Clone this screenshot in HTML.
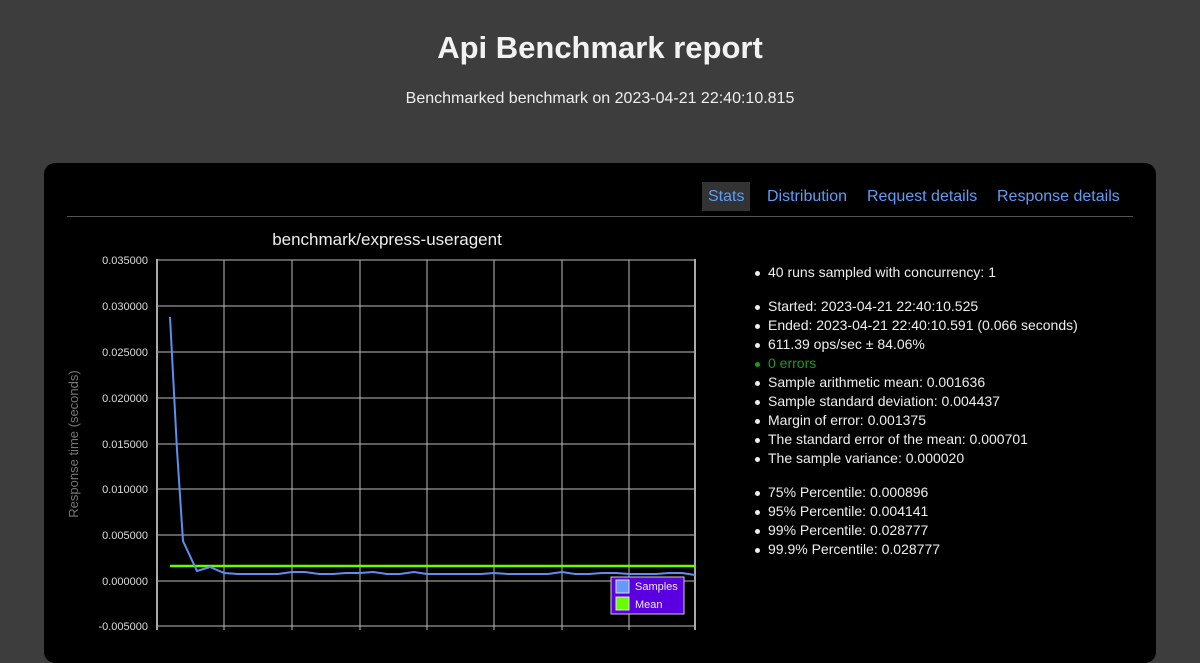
<!DOCTYPE html>
<html><head><meta charset="utf-8"><style>
*{margin:0;padding:0;box-sizing:border-box}
body{width:1200px;height:630px;overflow:hidden;background:#3d3d3d;font-family:"Liberation Sans",sans-serif;color:#eee;position:relative}
h1{position:absolute;top:30px;width:100%;text-align:center;font-size:31px;font-weight:bold;color:#f2f2f2}
.sub{position:absolute;top:90px;width:100%;text-align:center;font-size:16px;color:#eee}
.card{position:absolute;left:44px;top:163px;width:1112px;height:500px;background:#000;border-radius:11px}
.tabs{position:absolute;top:182px;left:0;width:1200px;height:30px}
.tab{position:absolute;top:0;height:29px;line-height:29px;font-size:16px;color:#5c9df5;padding:0 6px}
.hr{position:absolute;left:67px;top:216px;width:1066px;height:1px;background:#555}
ul{position:absolute;left:768px;list-style:none;font-size:14px;line-height:19px;color:#eee}
li{position:relative}
li:before{content:"";position:absolute;left:-13px;top:8px;width:5px;height:5px;border-radius:50%;background:#eee}
li.g{color:#1c9a1c}li.g:before{background:#1c9a1c}
</style></head><body>
<h1>Api Benchmark report</h1>
<div class="sub">Benchmarked benchmark on 2023-04-21 22:40:10.815</div>
<div class="card"></div>
<div class="tabs">
<div class="tab" style="left:702px;background:#333">Stats</div>
<div class="tab" style="left:761px">Distribution</div>
<div class="tab" style="left:861px">Request details</div>
<div class="tab" style="left:991px">Response details</div>
</div>
<div class="hr"></div>
<svg style="position:absolute;left:0;top:0" width="1200" height="630" font-family="Liberation Sans, sans-serif">
<text x="387" y="245" fill="#eee" font-size="17" text-anchor="middle">benchmark/express-useragent</text>
<g stroke="#bbb" stroke-width="1">
<line x1="157" y1="260" x2="694" y2="260"/><line x1="157" y1="306" x2="694" y2="306"/><line x1="157" y1="352" x2="694" y2="352"/><line x1="157" y1="398" x2="694" y2="398"/><line x1="157" y1="444" x2="694" y2="444"/><line x1="157" y1="489" x2="694" y2="489"/><line x1="157" y1="535" x2="694" y2="535"/><line x1="157" y1="581" x2="694" y2="581"/><line x1="157" y1="626" x2="694" y2="626"/>
<line x1="224" y1="260" x2="224" y2="630"/><line x1="292" y1="260" x2="292" y2="630"/><line x1="360" y1="260" x2="360" y2="630"/><line x1="427" y1="260" x2="427" y2="630"/><line x1="494" y1="260" x2="494" y2="630"/><line x1="562" y1="260" x2="562" y2="630"/><line x1="629" y1="260" x2="629" y2="630"/>
</g>
<g stroke="#aaa" stroke-width="2"><line x1="157" y1="259" x2="157" y2="630"/><line x1="695" y1="259" x2="695" y2="630"/></g>
<g fill="#ddd" font-size="11" text-anchor="end">
<text x="148" y="264">0.035000</text><text x="148" y="310">0.030000</text><text x="148" y="356">0.025000</text><text x="148" y="402">0.020000</text><text x="148" y="448">0.015000</text><text x="148" y="493">0.010000</text><text x="148" y="539">0.005000</text><text x="148" y="585">0.000000</text><text x="148" y="630">-0.005000</text>
</g>
<text transform="translate(78,444) rotate(-90)" fill="#777" font-size="13" text-anchor="middle">Response time (seconds)</text>
<line x1="170" y1="566" x2="695" y2="566" stroke="#66ff00" stroke-width="2.5"/>
<polyline fill="none" stroke="#5b8ff0" stroke-width="2" points="170,317 177,450 183,541 197,571 210,567 224,573 238,574 251,574 265,574 278,574 292,572 305,572 319,574 333,574 346,573 360,573 373,572 387,574 400,574 414,572 427,574 441,574 454,574 468,574 481,574 494,573 508,574 521,574 535,574 548,574 562,572 575,574 589,574 602,573 616,573 629,574 642,574 656,574 669,573 682,573 695,575"/>
<rect x="611" y="577" width="73" height="37" fill="#5a00e0" stroke="#ccc" stroke-width="1"/>
<rect x="616" y="580" width="13" height="13" fill="#6699ff" stroke="#ddd"/>
<rect x="616" y="597" width="13" height="13" fill="#66ff00" stroke="#ddd"/>
<text x="635" y="590" fill="#eee" font-size="11">Samples</text>
<text x="635" y="608" fill="#eee" font-size="11">Mean</text>
</svg>
<ul style="top:263px"><li>40 runs sampled with concurrency: 1</li></ul>
<ul style="top:297px"><li>Started: 2023-04-21 22:40:10.525</li><li>Ended: 2023-04-21 22:40:10.591 (0.066 seconds)</li><li>611.39 ops/sec ± 84.06%</li><li class="g">0 errors</li><li>Sample arithmetic mean: 0.001636</li><li>Sample standard deviation: 0.004437</li><li>Margin of error: 0.001375</li><li>The standard error of the mean: 0.000701</li><li>The sample variance: 0.000020</li></ul>
<ul style="top:483px"><li>75% Percentile: 0.000896</li><li>95% Percentile: 0.004141</li><li>99% Percentile: 0.028777</li><li>99.9% Percentile: 0.028777</li></ul>
</body></html>
